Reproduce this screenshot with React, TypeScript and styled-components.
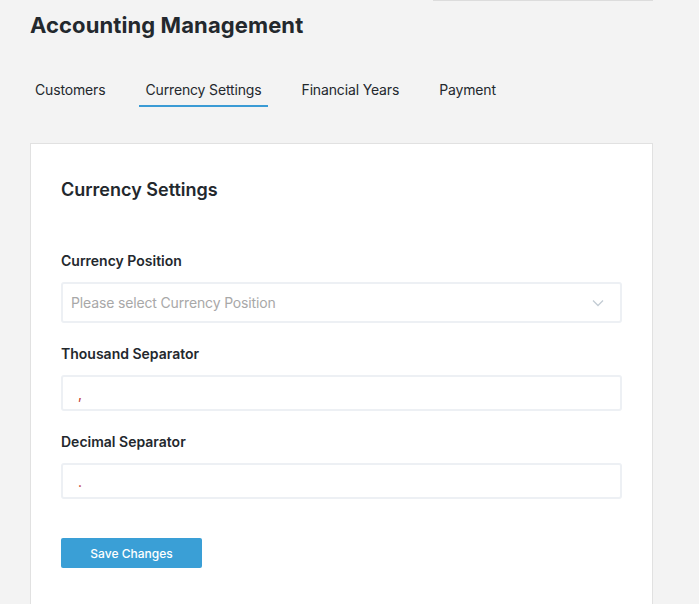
import React from 'react';
import styled, { createGlobalStyle } from 'styled-components';

const GlobalStyle = createGlobalStyle`
  html, body {
    margin: 0;
    padding: 0;
    background: #f3f3f3;
  }
  body {
    font-family: Inter, "Noto Sans", "Liberation Sans", sans-serif;
    color: #23282d;
  }
`;

const Page = styled.div`
  padding: 0 46px 0 30px;
  height: 604px;
  overflow: hidden;
  box-sizing: border-box;
`;

const TopStrip = styled.div`
  height: 1px;
  width: 220px;
  margin-left: 403px;
  background: #dcdcdc;
`;

const Title = styled.h1`
  margin: 10px 0 0;
  font-size: 22px;
  line-height: 28px;
  font-weight: 700;
  letter-spacing: 0.1px;
  color: #23282d;
`;

const Tabs = styled.nav`
  display: flex;
  gap: 28px;
  margin: 42px 0 0 -1px;
`;

const Tab = styled.a<{ $active?: boolean }>`
  display: block;
  padding: 0 6px 6px;
  font-size: 14px;
  line-height: 18px;
  letter-spacing: -0.15px;
  color: #23282d;
  text-decoration: none;
  border-bottom: 2px solid ${(p) => (p.$active ? '#3a9bd5' : 'transparent')};
`;

const Card = styled.section`
  margin-top: 36px;
  width: 623px;
  box-sizing: border-box;
  background: #fff;
  border: 1px solid #e1e1e1;
  padding: 35px 30px 60px;
  min-height: 470px;
`;

const CardTitle = styled.h2`
  margin: 0 0 51px;
  font-size: 18px;
  line-height: 22px;
  font-weight: 600;
  color: #23282d;
`;

const Field = styled.div`
  margin-bottom: 22px;
`;

const Label = styled.label`
  display: block;
  font-size: 14px;
  line-height: 18px;
  font-weight: 600;
  margin-bottom: 12px;
  color: #23282d;
`;

const SelectBox = styled.div`
  height: 41px;
  box-sizing: border-box;
  border: 2px solid #edf0f4;
  border-radius: 3px;
  display: flex;
  align-items: center;
  justify-content: space-between;
  padding: 0 16px 0 8px;
  font-size: 14px;
  letter-spacing: -0.15px;
  color: #a8a8a8;
`;

const TextBox = styled.div`
  height: 36px;
  box-sizing: border-box;
  border: 2px solid #edf0f4;
  border-radius: 3px;
  display: flex;
  align-items: center;
  padding: 0 15px;
  font-size: 14px;
  color: #c0392b;
`;

const Chevron = () => (
  <svg width="12" height="8" viewBox="0 0 12 8" fill="none">
    <path d="M1 1.5l5 5 5-5" stroke="#c3ccd4" strokeWidth="1.3" />
  </svg>
);

const SaveButton = styled.button`
  margin-top: 17px;
  width: 141px;
  height: 30px;
  border: none;
  border-radius: 2px;
  background: #3a9fd6;
  color: #fff;
  font-family: inherit;
  font-size: 12px;
  font-weight: 500;
  cursor: pointer;
`;

const App: React.FC = () => {
  return (
    <>
      <GlobalStyle />
      <Page>
        <TopStrip />
        <Title>Accounting Management</Title>
        <Tabs>
          <Tab>Customers</Tab>
          <Tab $active>Currency Settings</Tab>
          <Tab>Financial Years</Tab>
          <Tab>Payment</Tab>
        </Tabs>
        <Card>
          <CardTitle>Currency Settings</CardTitle>
          <Field>
            <Label>Currency Position</Label>
            <SelectBox>
              <span>Please select Currency Position</span>
              <Chevron />
            </SelectBox>
          </Field>
          <Field>
            <Label>Thousand Separator</Label>
            <TextBox>,</TextBox>
          </Field>
          <Field>
            <Label>Decimal Separator</Label>
            <TextBox>.</TextBox>
          </Field>
          <SaveButton>Save Changes</SaveButton>
        </Card>
      </Page>
    </>
  );
};

export default App;
